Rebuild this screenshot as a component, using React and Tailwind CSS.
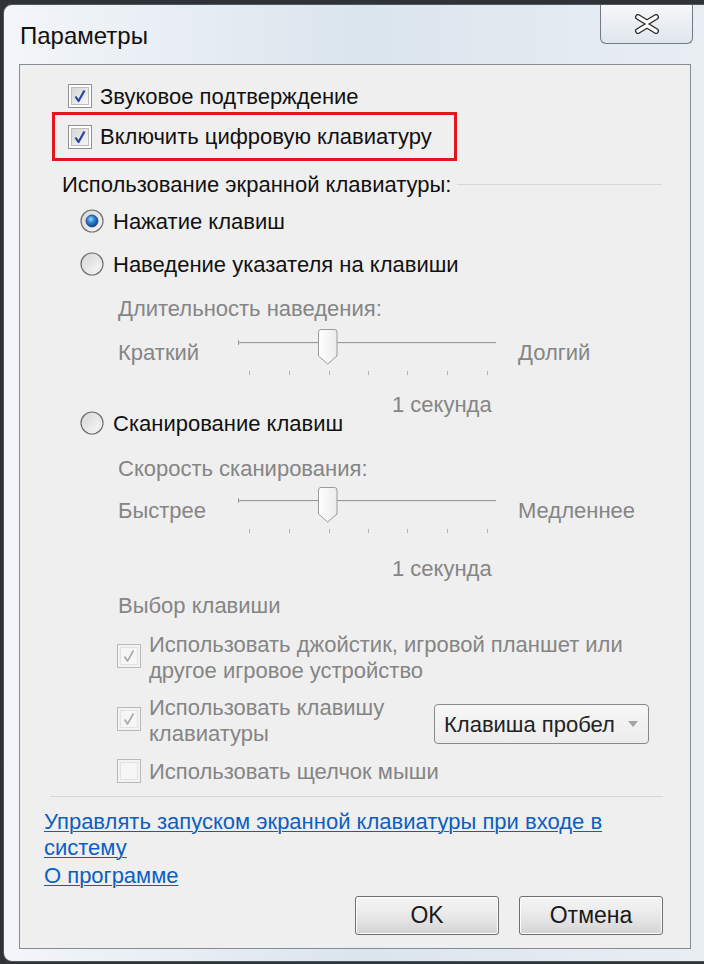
import React from 'react';

const font = { fontFamily: '"Liberation Sans", Arial, sans-serif' };

function Check({ checked, disabled }) {
  return (
    <span
      className={`flex h-[24px] w-[24px] shrink-0 items-center justify-center border ${
        disabled ? 'border-[#b9b9b9] bg-[#f3f3f3]' : 'border-[#8e8f8f] bg-white'
      }`}
    >
      <span
        className={`flex h-[18px] w-[18px] items-center justify-center border ${
          disabled ? 'border-[#e2e2e2] bg-[#f6f6f6]' : 'border-[#bcbcbc] bg-gradient-to-br from-[#d6d6d6] to-[#f7f7f7]'
        }`}
      >
        {checked && (
          <svg viewBox="0 0 16 16" className="h-[16px] w-[16px]">
            <path
              d="M3.5 8.5 L6.5 13 L12.5 2.5"
              fill="none"
              stroke={disabled ? '#a9a9a9' : '#2446a8'}
              strokeWidth={disabled ? 1.6 : 2.2}
              strokeLinejoin="round"
            />
          </svg>
        )}
      </span>
    </span>
  );
}

function Radio({ selected }) {
  return (
    <svg viewBox="0 0 24 24" className="h-[24px] w-[24px] shrink-0">
      <defs>
        <linearGradient id={selected ? 'rg-on' : 'rg-off'} x1="0" y1="0" x2="1" y2="1">
          <stop offset="0" stopColor="#d0d0d0" />
          <stop offset="1" stopColor="#ffffff" />
        </linearGradient>
        <radialGradient id="dot" cx="0.4" cy="0.35" r="0.7">
          <stop offset="0" stopColor="#9bd6ff" />
          <stop offset="0.45" stopColor="#2a7fd0" />
          <stop offset="1" stopColor="#0a3e86" />
        </radialGradient>
      </defs>
      <circle cx="12" cy="12" r="11" fill={`url(#${selected ? 'rg-on' : 'rg-off'})`} stroke="#6f6f6f" strokeWidth="1.2" />
      <circle cx="12" cy="12" r="8.5" fill="none" stroke="#e6e6e6" strokeWidth="1" />
      {selected && <circle cx="12" cy="12" r="6" fill="url(#dot)" stroke="#1a3d73" strokeWidth="0.8" />}
    </svg>
  );
}

function Slider() {
  const ticks = [11, 51, 91, 130, 169, 209, 249];
  return (
    <svg width="258" height="50" viewBox="0 0 258 50" className="shrink-0">
      <defs>
        <linearGradient id="thumb" x1="0" y1="0" x2="1" y2="0">
          <stop offset="0" stopColor="#ffffff" />
          <stop offset="1" stopColor="#ececec" />
        </linearGradient>
      </defs>
      <line x1="0.5" y1="15.5" x2="258" y2="15.5" stroke="#9a9a9a" strokeWidth="1" />
      <line x1="0.5" y1="16.5" x2="258" y2="16.5" stroke="#e2e2e2" strokeWidth="1" />
      <line x1="0.5" y1="13" x2="0.5" y2="18" stroke="#9a9a9a" strokeWidth="1" />
      <path
        d="M80.5 5 Q80.5 2.5 83 2.5 L96.5 2.5 Q99 2.5 99 5 L99 29 L89.75 37 L80.5 29 Z"
        fill="url(#thumb)"
        stroke="#9a9a9a"
        strokeWidth="1"
      />
      {ticks.map((x) => (
        <line key={x} x1={x + 0.5} y1="44" x2={x + 0.5} y2="48" stroke="#b2b2b2" strokeWidth="1" />
      ))}
    </svg>
  );
}

function SliderRow({ left, right }) {
  return (
    <div className="ml-[98px] flex h-[50px] items-start text-[#858585]">
      <div className="w-[120px] pt-[13px] leading-[26px]">{left}</div>
      <Slider />
      <div className="ml-[22px] whitespace-nowrap pt-[13px] leading-[26px]">{right}</div>
    </div>
  );
}

function WinButton({ children }) {
  return (
    <button className="flex h-[39px] w-[144px] items-center justify-center rounded-[3px] border border-[#707070] bg-gradient-to-b from-[#f4f4f4] via-[#e9e9e9] to-[#d3d3d3] text-[23px] text-[#1a1a1a] shadow-[inset_0_0_0_1px_#fcfcfc]">
      {children}
    </button>
  );
}

export default function App() {
  return (
    <div className="h-[964px] w-[704px] overflow-hidden bg-[#2f3338] pl-[3px] pt-[4px]" style={font}>
      <div className="flex h-[958px] w-[712px] flex-col rounded-[9px] border border-[#4f5861] bg-gradient-to-r from-[#f3f6f9] via-[#dbe5ee] to-[#e9eef3]">
        {/* title bar */}
        <div className="flex h-[59px] items-start">
          <div className="pl-[16px] pt-[16px] text-[24px] leading-[30px] text-[#111]">Параметры</div>
          <div className="ml-auto mr-[21px] flex h-[39px] w-[93px] items-center justify-center rounded-b-[6px] border border-t-0 border-[#6f7a86] bg-gradient-to-b from-[#f6f8fa] to-[#dfe6ec]">
            <svg viewBox="0 0 28 20" className="h-[20px] w-[28px]">
              <path
                d="M5 3 L14 8.5 L23 3 M5 17 L14 11.5 L23 17"
                fill="none"
                stroke="#2b2b2b"
                strokeWidth="6"
                strokeLinecap="round"
              />
              <path
                d="M5 3 L14 8.5 L23 3 M5 17 L14 11.5 L23 17"
                fill="none"
                stroke="#ffffff"
                strokeWidth="3.4"
                strokeLinecap="round"
              />
            </svg>
          </div>
        </div>

        {/* content panel */}
        <div className="ml-[15px] flex h-[885px] w-[672px] flex-col border border-[#868c93] bg-[#efefef] pt-[18px] text-[22px] text-[#111]">
          <div className="ml-[48px] flex h-[26px] items-center gap-[8px]">
            <Check checked />
            <span>Звуковое подтверждение</span>
          </div>

          <div className="ml-[32px] mt-[3px] flex h-[49px] w-[405px] items-center gap-[8px] border-[3px] border-[#e3161c] pl-[13px]">
            <Check checked />
            <span className="whitespace-nowrap">Включить цифровую клавиатуру</span>
          </div>

          <div className="ml-[42px] mr-[28px] mt-[10px] flex h-[26px] items-center gap-[6px]">
            <span className="whitespace-nowrap">Использование экранной клавиатуры:</span>
            <span className="h-px flex-1 bg-[#d6d6d6]" />
          </div>

          <div className="ml-[60px] mt-[11px] flex h-[26px] items-center gap-[9px]">
            <Radio selected />
            <span>Нажатие клавиш</span>
          </div>

          <div className="ml-[60px] mt-[17px] flex h-[26px] items-center gap-[9px]">
            <Radio />
            <span>Наведение указателя на клавиши</span>
          </div>

          <div className="ml-[98px] mt-[19px] h-[26px] leading-[26px] text-[#858585]">Длительность наведения:</div>

          <div className="mt-[5px]">
            <SliderRow left="Краткий" right="Долгий" />
          </div>

          <div className="ml-[372px] mt-[19px] h-[18px] leading-[18px] text-[#858585]">1 секунда</div>

          <div className="ml-[60px] mt-[-4px] flex h-[26px] items-center gap-[9px]">
            <Radio />
            <span>Сканирование клавиш</span>
          </div>

          <div className="ml-[98px] mt-[20px] h-[26px] leading-[26px] text-[#858585]">Скорость сканирования:</div>

          <div className="mt-[3px]">
            <SliderRow left="Быстрее" right="Медленнее" />
          </div>

          <div className="ml-[372px] mt-[25px] h-[18px] leading-[18px] text-[#858585]">1 секунда</div>

          <div className="ml-[98px] mt-[15px] h-[26px] leading-[26px] text-[#858585]">Выбор клавиши</div>

          <div className="ml-[97px] mt-[13px] flex items-start gap-[8px] text-[#858585]">
            <div className="pt-[12px]">
              <Check checked disabled />
            </div>
            <div className="whitespace-nowrap leading-[26px]">
              Использовать джойстик, игровой планшет или
              <br />
              другое игровое устройство
            </div>
          </div>

          <div className="mt-[11px] flex items-start text-[#858585]">
            <div className="ml-[97px] flex w-[317px] items-start gap-[8px]">
              <div className="pt-[12px]">
                <Check checked disabled />
              </div>
              <div className="whitespace-nowrap leading-[26px]">
                Использовать клавишу
                <br />
                клавиатуры
              </div>
            </div>
            <div className="mt-[9px] flex h-[40px] w-[215px] items-center justify-between rounded-[4px] border border-[#8a8a8a] bg-gradient-to-b from-[#f7f7f7] to-[#ececec] pl-[9px] pr-[10px] text-[#222]">
              <span className="whitespace-nowrap">Клавиша пробел</span>
              <svg viewBox="0 0 10 6" className="h-[6px] w-[10px]">
                <path d="M0 0 L10 0 L5 6 Z" fill="#a4a4a4" />
              </svg>
            </div>
          </div>

          <div className="ml-[97px] mt-[11px] flex h-[26px] items-center gap-[8px] text-[#858585]">
            <Check disabled />
            <span>Использовать щелчок мыши</span>
          </div>

          <div className="ml-[30px] mt-[12px] h-px w-[613px] bg-[#d6d6d6]" />

          <div className="ml-[24px] mt-[12px] flex flex-col leading-[26px] text-[#0b5fc4]">
            <a className="whitespace-nowrap underline decoration-1 underline-offset-2">
              Управлять запуском экранной клавиатуры при входе в
              <br />
              систему
            </a>
            <a className="mt-[2px] underline decoration-1 underline-offset-2">О программе</a>
          </div>

          <div className="mr-[27px] mt-[7px] flex justify-end gap-[20px]">
            <WinButton>OK</WinButton>
            <WinButton>Отмена</WinButton>
          </div>
        </div>
      </div>
    </div>
  );
}
